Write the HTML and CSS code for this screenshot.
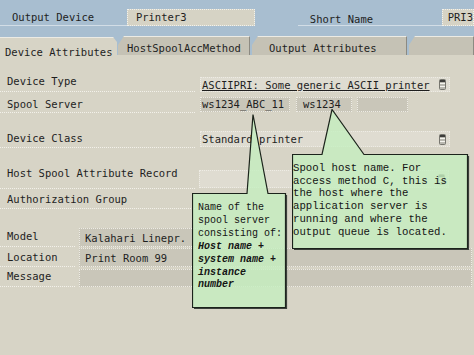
FILE: index.html
```html
<!DOCTYPE html>
<html>
<head>
<meta charset="utf-8">
<link rel="stylesheet" href="styles.css">
</head>
<body>
<div class="screen">
  <header class="hdr">
    <div class="hlabel">Output Device</div>
    <div class="hfield f-printer">Printer3</div>
    <div class="hlabel short">Short Name</div>
    <div class="hfield f-short">PRI3</div>
  </header>
  <nav class="tabs">
    <div class="tab active">Device Attributes</div>
    <div class="tab t2">HostSpoolAccMethod</div>
    <div class="tab t3">Output Attributes</div>
    <div class="tab t4"></div>
  </nav>
  <main class="body">
    <div class="row r-type">
      <div class="lbl">Device Type</div>
      <div class="fld light wide"><span class="ul">ASCIIPRI: Some generic ASCII printer</span>
        <svg class="dd" width="7" height="11" viewBox="0 0 7 11"><rect x="0.5" y="0.5" width="6" height="10" rx="1" fill="#b9b8b0" stroke="#77766f"/><rect x="1" y="1" width="5" height="2" fill="#3d3d3a"/><path d="M1 4.5h5M1 7.5h5" stroke="#f4f4ee"/></svg>
      </div>
    </div>
    <div class="row r-spool">
      <div class="lbl">Spool Server</div>
      <div class="fld dark s1">ws1234_ABC_11</div>
      <div class="fld dark s2">ws1234</div>
      <div class="fld dark s3"></div>
    </div>
    <div class="row r-class">
      <div class="lbl">Device Class</div>
      <div class="fld light wide">Standard printer
        <svg class="dd" width="7" height="11" viewBox="0 0 7 11"><rect x="0.5" y="0.5" width="6" height="10" rx="1" fill="#b9b8b0" stroke="#77766f"/><rect x="1" y="1" width="5" height="2" fill="#3d3d3a"/><path d="M1 4.5h5M1 7.5h5" stroke="#f4f4ee"/></svg>
      </div>
    </div>
    <div class="row r-host">
      <div class="lbl">Host Spool Attribute Record</div>
      <div class="fld light wide host">
        <svg class="dd" width="7" height="11" viewBox="0 0 7 11"><rect x="0.5" y="0.5" width="6" height="10" rx="1" fill="#b9b8b0" stroke="#77766f"/><rect x="1" y="1" width="5" height="2" fill="#3d3d3a"/><path d="M1 4.5h5M1 7.5h5" stroke="#f4f4ee"/></svg>
      </div>
    </div>
    <div class="row r-auth">
      <div class="lbl">Authorization Group</div>
    </div>
    <div class="row r-model">
      <div class="lbl narrow">Model</div>
      <div class="fld dark model">Kalahari Linepr.</div>
    </div>
    <div class="row r-loc">
      <div class="lbl narrow">Location</div>
      <div class="fld dark long">Print Room 99</div>
    </div>
    <div class="row r-msg">
      <div class="lbl narrow">Message</div>
      <div class="fld dark long"></div>
    </div>
  </main>

  <div class="callout co-server">
    <svg class="co-shape" width="96" height="196" viewBox="0 0 96 196">
      <path class="co-fill" d="M0.5,79.5 H55 L61,0.5 L76,79.5 H93.5 V193.5 H0.5 Z"/>
      <path class="co-shadow" d="M94.5,81 V194.5 H2"/>
    </svg>
    <div class="co-text">Name of the
spool server
consisting of:
<b>Host name +
system name +
instance
number</b></div>
  </div>

  <div class="callout co-host">
    <svg class="co-shape" width="178" height="142" viewBox="0 0 178 142">
      <path class="co-fill" d="M0.5,45.5 H30 L40,0.5 L72,45.5 H175.5 V139.5 H0.5 Z"/>
      <path class="co-shadow" d="M176.5,47 V140.5 H2"/>
    </svg>
    <div class="co-text">Spool host name. For
access method C, this is
the host where the
application server is
running and where the
output queue is located.</div>
  </div>
</div>
</body>
</html>
```
FILE: styles.css
```css
* { box-sizing: border-box; }
html, body { margin: 0; padding: 0; }
body {
  width: 474px;
  height: 355px;
  overflow: hidden;
  background: #d7d4c6;
  font-family: "DejaVu Sans Mono", "Liberation Mono", monospace;
  font-size: 10.5px;
  color: #1e1e1e;
}
.screen { position: relative; width: 474px; height: 355px; background: #d7d4c6; }

/* header */
.hdr {
  height: 36px;
  background: #a8bed0;
  display: flex;
  align-items: flex-start;
  padding-top: 9px;
}
.hlabel {
  width: 127px;
  height: 17px;
  line-height: 16px;
  padding-left: 12px;
  border-bottom: 1px solid #d2dde6;
}
.hlabel.short { width: 144px; margin-left: 43px; padding-top: 2px; }
.hfield {
  height: 17px;
  line-height: 15px;
  background: #d6d3c5;
  border: 1px dotted #f3f2ec;
}
.f-printer { width: 128px; padding-left: 8px; }
.f-short { flex: 1; padding-left: 5px; }

/* tabs */
.tabs {
  height: 21px;
  display: flex;
  align-items: flex-start;
  background: linear-gradient(#a8bed0 0 19px, #d7d4c6 19px);
}
.tab {
  height: 19px;
  background: #c5c2b5;
  border-top: 1px solid #ecebe4;
  border-right: 1px solid #8c8a82;
  padding-top: 5px;
  line-height: 12px;
  white-space: nowrap;
  clip-path: polygon(6px 0, 100% 0, 100% 100%, 0 100%, 0 9px);
}
.tab.active {
  width: 117px;
  height: 20px;
  margin-top: 1px;
  background: #d7d4c6;
  padding: 8px 0 0 5px;
  border-right: none;
  clip-path: polygon(0 0, 113px 0, 100% 5px, 100% 100%, 0 100%);
}
.t2 { width: 132px; margin-left: 1px; padding-left: 9px; }
.t3 { width: 155px; margin-left: 2px; padding-left: 17px; }
.t4 { flex: 1; margin-left: 2px; }

/* body rows */
.body { display: flex; flex-direction: column; padding-top: 15px; }
.row { display: flex; align-items: flex-start; }
.lbl {
  width: 195px;
  align-self: stretch;
  padding-left: 7px;
  line-height: 12px;
  white-space: nowrap;
  border-bottom: 1px dotted #f3f1ea;
}
.lbl.narrow { width: 75px; }
.fld {
  display: flex;
  align-items: center;
  padding-left: 1px;
  white-space: nowrap;
  border: 1px dotted #eeece5;
}
.fld.light { background: #dfdcd1; }
.fld.dark { background: #c9c6b9; }
.fld.wide { width: 250px; margin-left: 5px; }
.ul { text-decoration: underline; text-underline-offset: 1px; }
.dd { margin-left: auto; margin-right: 3px; flex: none; }

.s1 { width: 90px; margin-left: 5px; }
.s2 { width: 56px; margin-left: 6px; padding-left: 6px; }
.s3 { width: 51px; margin-left: 5px; }
.model { width: 125px; margin-left: 4px; padding-left: 5px; }
.long { width: 393px; margin-left: 4px; padding-left: 5px; }

.r-type { height: 20px; }
.r-type .lbl { padding-top: 3px; }
.r-type .fld { margin-top: 5px; height: 15px; }

.r-spool { height: 21px; }
.r-spool .lbl { padding-top: 6px; }
.r-spool .fld { margin-top: 5px; height: 15px; line-height: 13px; }

.r-class { height: 35px; }
.r-class .lbl { padding-top: 19px; }
.r-class .fld { margin-top: 18px; height: 16px; }

.r-host { height: 41px; }
.r-host .lbl { padding-top: 19px; }
.r-host .fld { margin-top: 22px; height: 18px; margin-left: 4px; }

.r-auth { height: 20px; }
.r-auth .lbl { padding-top: 4px; }

.r-model { height: 38px; }
.r-model .lbl { padding-top: 21px; }
.r-model .fld { margin-top: 19px; height: 19px; }

.r-loc { height: 20px; }
.r-loc .lbl { padding-top: 4px; }
.r-loc .fld { margin-top: 1px; height: 19px; }

.r-msg { height: 20px; }
.r-msg .lbl { padding-top: 3px; }
.r-msg .fld { margin-top: 2px; height: 18px; }

/* callouts */
.callout { position: absolute; }
.co-shape { position: absolute; left: 0; top: 0; }
.co-fill { fill: rgba(198, 238, 192, 0.82); stroke: #1b231b; stroke-width: 1.2; }
.co-shadow { fill: none; stroke: #3a3f3a; stroke-width: 1.2; }
.co-text {
  position: absolute;
  font-family: "Liberation Mono", "Courier New", monospace;
  color: #141414;
  white-space: pre;
}
.co-server { left: 192px; top: 114px; width: 96px; height: 196px; }
.co-server .co-text { left: 6px; top: 88px; font-size: 10px; line-height: 12.9px; }
.co-server b { font-style: italic; font-weight: bold; }
.co-host { left: 292px; top: 109px; width: 178px; height: 142px; }
.co-host .co-text { left: 1px; top: 53px; font-size: 10.7px; line-height: 12.7px; }
```
